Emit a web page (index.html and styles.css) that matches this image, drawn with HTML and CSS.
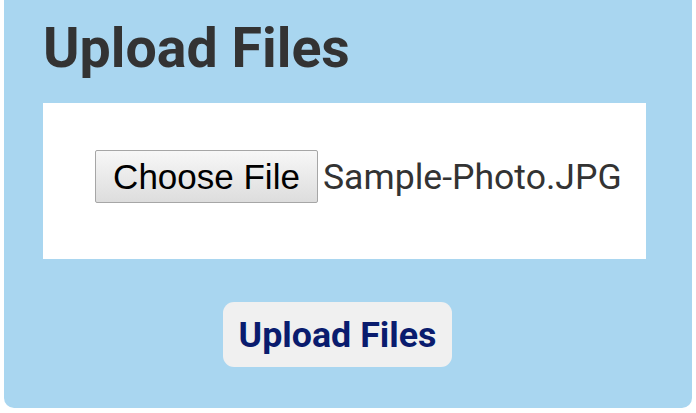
FILE: index.html
```html
<!DOCTYPE html>
<html lang="en">
<head>
    <meta charset="UTF-8">
    <meta name="viewport" content="width=device-width, initial-scale=1.0">
    <title>Upload Files</title>
    <link rel="stylesheet" href="styles.css">
</head>
<body>
    <div class="panel">
        <h1 class="title">Upload Files</h1>
        <div class="file-box">
            <div class="file-input">
                <button class="choose">Choose File</button>
                <span class="file-name">Sample-Photo.JPG</span>
            </div>
        </div>
        <button class="upload">Upload Files</button>
    </div>
</body>
</html>
```

FILE: styles.css
```css
body {
    margin: 0;
    padding: 0;
    background-color: #fff;
    font-family: Roboto, "Liberation Sans", Arial, sans-serif;
}
.panel {
    margin: 0 4px;
    height: 408px;
    box-sizing: border-box;
    padding: 21px 39px 0;
    background-color: #a9d6f0;
    border-radius: 0 0 10px 10px;
}
.title {
    margin: 0;
    font-size: 55.5px;
    line-height: 56px;
    font-weight: 700;
    color: #333;
}
.file-box {
    width: 603px;
    height: 156px;
    box-sizing: border-box;
    margin-top: 26px;
    padding: 47px 0 0 52px;
    background-color: #fff;
}
.file-input {
    display: flex;
    align-items: center;
    gap: 5px;
}
.choose {
    width: 223px;
    height: 53px;
    padding: 0;
    font-family: "Liberation Sans", Arial, sans-serif;
    font-size: 35px;
    color: #000;
    background: linear-gradient(#f7f7f7, #dddddd);
    border: 1px solid #a6a6a6;
    border-radius: 2px;
}
.file-name {
    font-size: 35.6px;
    color: #333;
}
.upload {
    display: flex;
    justify-content: center;
    align-items: center;
    width: 229px;
    height: 65px;
    margin: 43px 0 0 180px;
    padding: 0;
    font-family: Roboto, sans-serif;
    font-size: 35.8px;
    font-weight: 700;
    color: #0a1c6e;
    background-color: #f0f0f0;
    border: none;
    border-radius: 11px;
}
```
